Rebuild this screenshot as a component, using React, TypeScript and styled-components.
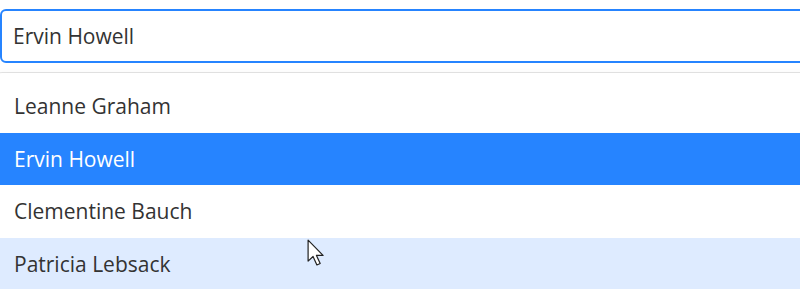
import React from "react";
import styled, { createGlobalStyle } from "styled-components";

const GlobalStyle = createGlobalStyle`
  html, body {
    margin: 0;
    padding: 0;
    background: #ffffff;
    overflow: hidden;
  }
  body {
    font-family: "Open Sans", "Noto Sans", sans-serif;
    color: hsl(0, 0%, 20%);
  }
`;

const users = ["Leanne Graham", "Ervin Howell", "Clementine Bauch", "Patricia Lebsack"];

const Page = styled.div`
  position: relative;
  width: 800px;
  height: 289px;
  overflow: hidden;
  padding-top: 9px;
  box-sizing: border-box;
`;

const Control = styled.div`
  height: 54px;
  margin-right: -20px;
  box-sizing: border-box;
  border: 2px solid #2684ff;
  border-radius: 6px;
  display: flex;
  align-items: center;
  padding: 0 11px;
  font-size: 21px;
  color: hsl(0, 0%, 20%);
`;

const Menu = styled.div`
  margin-top: 10px;
  margin-right: -20px;
  margin-left: -4px;
  padding-top: 7px;
  background: #ffffff;
  border-radius: 6px 6px 0 0;
  box-shadow: 0 0 0 1px hsla(0, 0%, 0%, 0.1), 0 4px 11px hsla(0, 0%, 0%, 0.1);
`;

const Option = styled.div<{ $selected?: boolean; $focused?: boolean }>`
  height: 52.5px;
  display: flex;
  align-items: center;
  padding: 0 18px;
  font-size: 21px;
  background: ${(p) => (p.$selected ? "#2684ff" : p.$focused ? "#deebff" : "transparent")};
  color: ${(p) => (p.$selected ? "#ffffff" : "hsl(0, 0%, 20%)")};
`;

const Pointer = styled.svg`
  position: absolute;
  left: 307px;
  top: 239px;
  width: 22px;
  height: 31px;
`;

export default function App() {
  return (
    <Page>
      <GlobalStyle />
      <Control>Ervin Howell</Control>
      <Menu>
        {users.map((u, i) => (
          <Option key={u} $selected={i === 1} $focused={i === 3}>
            {u}
          </Option>
        ))}
      </Menu>
      <Pointer viewBox="0 0 20 28">
        <path
          d="M1 1 L1 20 L5.5 15.8 L9 23.5 L12 22.2 L8.6 14.8 L14.6 14.8 Z"
          fill="#ffffff"
          stroke="#222222"
          strokeWidth="1.1"
          strokeLinejoin="round"
        />
      </Pointer>
    </Page>
  );
}
